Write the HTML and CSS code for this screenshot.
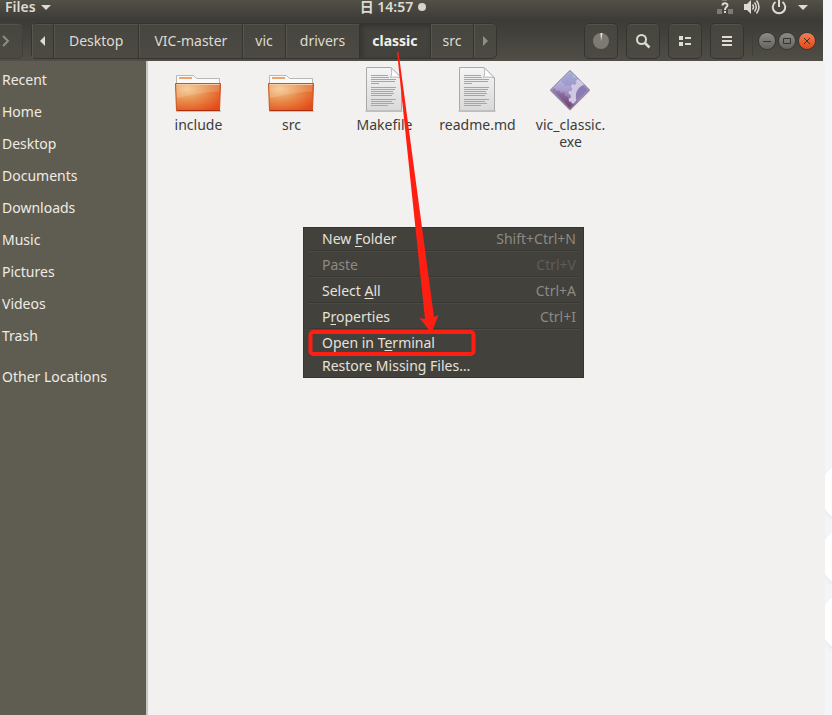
FILE: index.html
```html
<!DOCTYPE html>
<html lang="en">
<head>
    <meta charset="UTF-8">
    <meta name="viewport" content="width=device-width, initial-scale=1.0">
    <link rel="stylesheet" href="styles.css">
    <title>Files</title>
</head>
<body>
    <div class="window">
        <header class="top">
            <div class="panel">
                <button class="panel-btn app-menu">Files <svg width="10" height="5" viewBox="0 0 10 5"><path d="M0 0h10L5 5z"/></svg></button>
                <button class="panel-btn clock">日 14:57<span class="dot"></span></button>
                <div class="tray">
                    <button class="panel-btn" aria-label="Network">
                        <svg width="16" height="14" viewBox="0 0 16 14"><path fill="#7b7a75" d="M0 9h5v5H0zM11 9h5v5h-5zM5 0h5v1H5z"/><path fill="none" stroke="#dfdbd2" stroke-width="2" d="M5.500 5.500C5.500 2.500 10.500 2.500 10.500 5.300C10.500 7.300 8 7 8 10"/><path fill="#dfdbd2" d="M7 11h2v2H7z"/></svg>
                    </button>
                    <button class="panel-btn" aria-label="Volume">
                        <svg width="16" height="16" viewBox="0 0 16 16"><path d="M0 5h3l4-4v14l-4-4H0z"/><path class="line" d="M8.500 5.500q2 2.500 0 5M10.500 3.500q3.600 4.500 0 9M12.500 1.500q5 6.500 0 13"/></svg>
                    </button>
                    <button class="panel-btn" aria-label="Power">
                        <svg width="16" height="16" viewBox="0 0 16 16"><path class="line power" d="M4.500 3A6.200 6.200 0 1 0 11.500 3M8 0v8"/></svg>
                    </button>
                    <button class="panel-btn" aria-label="System menu">
                        <svg width="10" height="5" viewBox="0 0 10 5"><path d="M0 0h10L5 5z"/></svg>
                    </button>
                </div>
            </div>

            <div class="headerbar">
                <button class="forward" aria-label="Forward"><svg width="8" height="12" viewBox="0 0 8 12"><path d="M1 1l5 5-5 5" fill="none" stroke="#8f8d86" stroke-width="2"/></svg></button>
                <nav class="path">
                    <button class="arrow" aria-label="Scroll left"><svg width="5" height="10" viewBox="0 0 5 10"><path d="M5 0v10L0 5z"/></svg></button>
                    <button class="crumb wide">Desktop</button>
                    <button class="crumb wide">VIC-master</button>
                    <button class="crumb narrow">vic</button>
                    <button class="crumb">drivers</button>
                    <button class="crumb current">classic</button>
                    <button class="crumb narrow">src</button>
                    <button class="arrow off" aria-label="Scroll right"><svg width="5" height="10" viewBox="0 0 5 10"><path d="M0 0v10l5-5z"/></svg></button>
                </nav>
                <div class="tools">
                    <button class="tool" aria-label="Operations"><svg width="16" height="16" viewBox="0 0 16 16"><circle cx="8" cy="8" r="8" fill="#7d7a72"/><path d="M8 8L7.500 0h2z" fill="#eeebe5"/></svg></button>
                    <button class="tool" aria-label="Search"><svg width="16" height="16" viewBox="0 0 16 16"><circle cx="6.500" cy="6.500" r="4.500" fill="none" stroke="#dfdbd2" stroke-width="2"/><path d="M10 10l4.500 4.500" stroke="#dfdbd2" stroke-width="2.500"/></svg></button>
                    <button class="tool" aria-label="List view"><svg width="16" height="16" viewBox="0 0 16 16"><path d="M2 3h4v4H2zM2 9h4v4H2zM8 4h6v2H8zM8 10h6v2H8z"/></svg></button>
                    <button class="tool" aria-label="Menu"><svg width="16" height="16" viewBox="0 0 16 16"><path d="M3 3h10v2H3zM3 7h10v2H3zM3 11h10v2H3z"/></svg></button>
                </div>
                <div class="controls">
                    <button class="control" aria-label="Minimize"><svg width="16" height="16" viewBox="0 0 16 16"><path d="M4 8.500h8"/></svg></button>
                    <button class="control" aria-label="Maximize"><svg width="16" height="16" viewBox="0 0 16 16"><path d="M4.500 5.500h7v5h-7z"/></svg></button>
                    <button class="control close" aria-label="Close"><svg width="16" height="16" viewBox="0 0 16 16"><path d="M5 5l6 6M11 5l-6 6"/></svg></button>
                </div>
            </div>
        </header>

        <div class="main">
            <nav class="sidebar">
                <a href="#">Recent</a>
                <a href="#">Home</a>
                <a href="#">Desktop</a>
                <a href="#">Documents</a>
                <a href="#">Downloads</a>
                <a href="#">Music</a>
                <a href="#">Pictures</a>
                <a href="#">Videos</a>
                <a href="#">Trash</a>
                <a href="#" class="other">Other Locations</a>
            </nav>

            <main class="files">
                <a class="file" href="#">
                    <svg width="48" height="48" viewBox="1 0 48 48"><use href="#folder"/></svg>
                    <span>include</span>
                </a>
                <a class="file" href="#">
                    <svg width="48" height="48" viewBox="1 0 48 48"><use href="#folder"/></svg>
                    <span>src</span>
                </a>
                <a class="file" href="#">
                    <svg width="48" height="48" viewBox="1 0 48 48"><use href="#text"/></svg>
                    <span>Makefile</span>
                </a>
                <a class="file" href="#">
                    <svg width="48" height="48" viewBox="1 0 48 48"><use href="#text"/></svg>
                    <span>readme.md</span>
                </a>
                <a class="file" href="#">
                    <svg width="48" height="48" viewBox="1 0 48 48">
                        <path d="M24 5l20 20-20 20L4 25z" fill="#000" opacity=".15"/>
                        <path d="M24 4.500L43.500 24 24 43.500 4.500 24z" fill="url(#exeFill)" stroke="#6a6189"/>
                        <path d="M6 23l3-1 1 3 3-1 2 3 3-1 1 4 3 1v4l2 1-1 5L6 25z" fill="#5b3260" opacity=".3"/>
                        <path d="M24 5l3 3 0 3 4 1 0 3 2 1-4 4-4 1-3-2-3 1-1-3-2 0-1-3z" fill="#8a82b8" opacity=".4"/>
                        <path d="M35 15.500l3 3c-7 4-9 9-7 15l-3 4-2 0-1-2h-2v-3l2-1-.5-3-2-.5.5-3 2.500 0 1-3-2-1.500 2-2.500 2 1 2-2-1-2 2.500-1.500z" fill="#cfc8e2"/>
                        <path d="M38 18.500l5 5.500-12 12c-3-8 0-14 7-17.500z" fill="#8b7bb0"/>
                        <path d="M24 5.500L42.500 24 24 42.500 5.500 24z" fill="none" stroke="#fff" opacity=".25"/>
                    </svg>
                    <span>vic_classic.<br>exe</span>
                </a>
            </main>
        </div>

        <div class="menu" role="menu">
            <button role="menuitem"><span>New <u>F</u>older</span><kbd>Shift+Ctrl+N</kbd></button>
            <hr>
            <button role="menuitem" disabled><span>Paste</span><kbd>Ctrl+V</kbd></button>
            <hr>
            <button role="menuitem"><span>Select <u>A</u>ll</span><kbd>Ctrl+A</kbd></button>
            <hr>
            <button role="menuitem"><span>P<u>r</u>operties</span><kbd>Ctrl+I</kbd></button>
            <hr>
            <button role="menuitem"><span>Open in T<u>e</u>rminal</span></button>
            <button role="menuitem"><span>Restore Missing Files…</span></button>
        </div>

        <!-- red arrow and frame over the menu -->
        <svg class="marks" width="180" height="310" viewBox="300 50 180 310">
            <path d="M397 52h1.500L434 317l4.500-2L431.500 333l-12-15 5.500 1z" fill="#ff1f12"/>
            <rect x="310.500" y="332" width="163" height="22" rx="3" fill="none" stroke="#ff1f12" stroke-width="4"/>
        </svg>
    </div>

    <aside class="edge">
        <span></span>
        <span></span>
        <span></span>
    </aside>

    <!-- icon shapes -->
    <svg class="defs" width="0" height="0">
        <defs>
            <radialGradient id="folderFill" cx=".25" cy=".2" r=".95">
                <stop offset="0" stop-color="#f5c68b"/>
                <stop offset=".5" stop-color="#e68a48"/>
                <stop offset="1" stop-color="#e64a18"/>
            </radialGradient>
            <linearGradient id="pageFill" x2="0" y2="1">
                <stop offset="0" stop-color="#f5f5f5"/>
                <stop offset="1" stop-color="#d9d9d9"/>
            </linearGradient>
            <linearGradient id="exeFill" x2="0" y2="1">
                <stop offset="0" stop-color="#b8cbea"/>
                <stop offset=".5" stop-color="#a99dce"/>
                <stop offset="1" stop-color="#70376f"/>
            </linearGradient>
            <g id="folder">
                <path d="M2 44.500h45v1.500H2z" fill="#000" opacity=".18"/>
                <path d="M2.500 20V9.500h17l3 3H45.500V20z" fill="#fafafa" stroke="#b9b7b4"/>
                <path d="M5 11h13v2H5z" fill="#efa36d"/>
                <path d="M1.500 17.500h45l-1 27h-43z" fill="url(#folderFill)" stroke="#c5531f"/>
                <path d="M2.500 18.500h43l-.5 7C30 26 18 29 3 32z" fill="#fff" opacity=".15"/>
                <path d="M2.500 18.500h43" stroke="#f7cda2"/>
                <path d="M3 44.500h43" stroke="#a92f0e"/>
            </g>
            <g id="text">
                <path d="M5 45h38v1H5z" fill="#000" opacity=".12"/>
                <path d="M6.500 1.500H31L41.500 12v33h-35z" fill="url(#pageFill)" stroke="#a9a9a9"/>
                <path d="M31 1.500c1 3 1 7-.5 10 4-1 8-.5 11 .5z" fill="#fff" stroke="#b5b5b5"/>
                <path d="M11 9.500h17M11 11.500h18M11 13.500h25M11 15.500h24M11 17.500h8M11 21.500h25M11 23.500h24M11 25.500h22M11 27.500h23M11 29.500h21M11 33.500h25M11 35.500h21M11 37.500h23M11 39.500h17" stroke="#a6a6a6"/>
            </g>
        </defs>
    </svg>
</body>
</html>
```

FILE: styles.css
```css
*{
    box-sizing: border-box;
}
body{
    margin: 0;
    min-height: 100vh;
    display: flex;
    overflow: hidden;
    font-family: "Noto Sans", "Noto Sans CJK SC", sans-serif;
    font-size: 14px;
    background-color: #f3f5f8;
}
button{
    margin: 0;
    padding: 0;
    border: none;
    background: none;
    font: inherit;
    color: inherit;
    cursor: pointer;
}
a{
    color: inherit;
    text-decoration: none;
}
svg{
    display: block;
    flex: none;
}
.window{
    position: relative;
    flex: 1;
    display: flex;
    flex-direction: column;
}

/* top panel */
.top{
    margin-right: 2px;
    color: #dfdbd2;
}
.panel{
    display: grid;
    grid-template-columns: 1fr auto 1fr;
    align-items: center;
    height: 20px;
    padding: 0 15px 6px 5px;
    background: linear-gradient(#535047, #3c3b37);
}
.panel-btn{
    display: flex;
    align-items: center;
    gap: 5px;
    line-height: 14px;
    fill: #dfdbd2;
}
.app-menu, .clock{
    font-weight: 600;
}
.clock{
    margin-right: 27px;
}
.dot{
    width: 8px;
    height: 8px;
    border-radius: 50%;
    background-color: #d6d3cc;
}
.tray{
    display: flex;
    align-items: center;
    justify-content: flex-end;
    gap: 11px;
    height: 14px;
}
.line{
    fill: none;
    stroke: #dfdbd2;
    stroke-width: 1.5;
}
.power{
    stroke-width: 2;
}

/* header bar */
.headerbar{
    display: flex;
    align-items: center;
    height: 41px;
    padding-right: 8px;
    background: linear-gradient(#3c3b37, #504e46);
}
.forward, .path, .tool{
    height: 36px;
    border: 1px solid #35342f;
    border-radius: 5px;
    background: linear-gradient(#46453f, #4c4a43);
    box-shadow: inset 0 1px #555249;
}
.forward{
    width: 23px;
    padding-left: 2px;
    border-left: none;
    border-radius: 0 5px 5px 0;
    border-color: #403f3a;
}
.path{
    display: flex;
    margin-left: 8px;
    fill: #dfdbd2;
}
.path button{
    border-right: 1px solid #35342f;
    box-shadow: inset 1px 0 #57554d;
}
.path button:last-child{
    border-right: none;
}
.path .crumb{
    padding: 0 14px;
}
.path .wide{
    padding: 0 15px;
}
.path .narrow{
    padding: 0 12px;
}
.path .current{
    padding: 0 12px;
    font-weight: 700;
    color: #f2efe8;
    background-color: #43423d;
    box-shadow: inset 2px 2px 4px #34332f;
}
.path .arrow{
    display: flex;
    align-items: center;
    justify-content: center;
    width: 22px;
}
.path .off{
    fill: #908e87;
}
.tools{
    display: flex;
    gap: 8px;
    margin-left: auto;
    fill: #dfdbd2;
}
.tool{
    display: flex;
    align-items: center;
    justify-content: center;
    width: 34px;
}
.controls{
    display: flex;
    gap: 4px;
    align-items: center;
    height: 30px;
    margin-left: 8px;
    padding-left: 6px;
    border-left: 1px solid #403f3a;
}
.control{
    width: 16px;
    height: 16px;
    border-radius: 50%;
    background: linear-gradient(#8d8b84, #66645e);
    box-shadow: 0 0 0 1px #383732;
    fill: none;
    stroke: #35342f;
}
.close{
    background: linear-gradient(#f37f56, #df4818);
}

/* content */
.main{
    flex: 1;
    display: flex;
}
.sidebar{
    display: flex;
    flex-direction: column;
    width: 148px;
    padding: 3px 2px;
    border-right: 2px solid #c9c6c1;
    background-color: #5f5d51;
    color: #eeebe4;
    line-height: 32px;
}
.other{
    margin-top: 9px;
}
.files{
    flex: 1;
    display: grid;
    grid-template-columns: repeat(auto-fill, 93px);
    align-content: start;
    padding: 5px 4px;
    background-color: #f2f1f0;
    color: #3c3c3c;
}
.file{
    display: flex;
    flex-direction: column;
    align-items: center;
    gap: 2px;
    line-height: 17px;
    text-align: center;
}

/* context menu */
.menu{
    position: absolute;
    left: 303px;
    top: 227px;
    width: 281px;
    padding: 0 5px 1px;
    background-color: #42413c;
    box-shadow: inset 0 0 0 1px #35342f;
    color: #e6e2da;
}
.menu button{
    display: flex;
    justify-content: space-between;
    align-items: center;
    width: 100%;
    height: 22px;
    padding: 0 3px 0 14px;
}
.menu button:last-child{
    height: 24px;
}
.menu kbd{
    font: inherit;
    color: #8d8a83;
}
.menu button:disabled{
    color: #8d8a83;
}
.menu button:disabled kbd{
    color: #5f5d57;
}
.menu u{
    text-underline-offset: 2px;
}
.menu hr{
    height: 2px;
    margin: 1px 0;
    border: none;
    border-top: 1px solid #393833;
    border-bottom: 1px solid #4b4a45;
}
.marks{
    position: absolute;
    left: 300px;
    top: 50px;
    pointer-events: none;
}

/* round buttons cut off by the screen edge */
.edge{
    display: flex;
    flex-direction: column;
    justify-content: flex-end;
    gap: 3px;
    width: 7px;
    padding-bottom: 62px;
    overflow: hidden;
}
.edge span{
    width: 62px;
    height: 62px;
    margin-left: -5px;
    border-radius: 50%;
    background-color: #fff;
    box-shadow: 0 2px 4px rgba(0, 0, 0, 0.06);
}
.defs{
    position: absolute;
}
```
